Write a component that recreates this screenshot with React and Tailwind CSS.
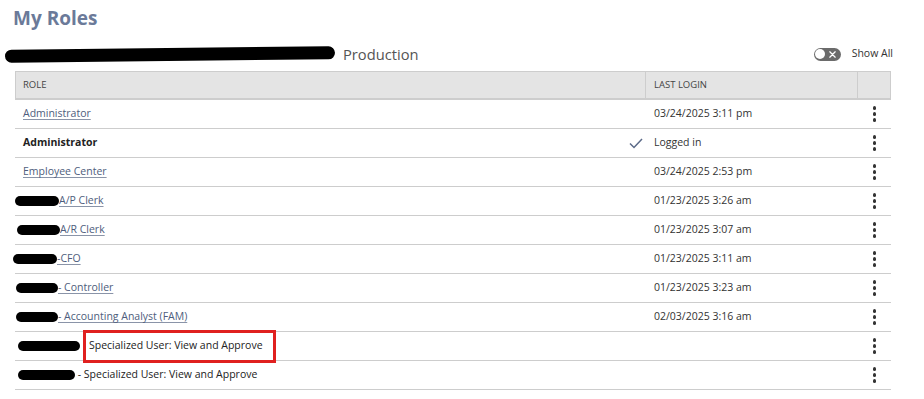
const rows = [
  { label: 'Administrator', link: true, last: '03/24/2025 3:11 pm' },
  { label: 'Administrator', bold: true, current: true, last: 'Logged in' },
  { label: 'Employee Center', link: true, last: '03/24/2025 2:53 pm' },
  { label: 'A/P Clerk', link: true, blob: 'w-[44px] -ml-[8px]', last: '01/23/2025 3:26 am' },
  { label: 'A/R Clerk', link: true, blob: 'w-[43px] -ml-[6px]', last: '01/23/2025 3:07 am' },
  { label: '-CFO', link: true, blob: 'w-[44px] -ml-[10px]', last: '01/23/2025 3:11 am' },
  { label: '- Controller', link: true, blob: 'w-[42px] -ml-[7px]', last: '01/23/2025 3:23 am' },
  { label: '- Accounting Analyst (FAM)', link: true, blob: 'w-[42px] -ml-[7px]', last: '02/03/2025 3:16 am' },
  { label: 'Specialized User: View and Approve', blob: 'w-[62px] -ml-[5px]', boxed: true, last: '' },
  { label: ' - Specialized User: View and Approve', blob: 'w-[57px] -ml-[5px]', last: '' },
]

function Kebab() {
  return (
    <div className="flex flex-col items-center gap-[2.5px]">
      <span className="w-[3.5px] h-[3.5px] rounded-full bg-[#333]" />
      <span className="w-[3.5px] h-[3.5px] rounded-full bg-[#333]" />
      <span className="w-[3.5px] h-[3.5px] rounded-full bg-[#333]" />
    </div>
  )
}

export default function App() {
  return (
    <div className="w-[924px] h-[399px] bg-white overflow-hidden text-[#333]" style={{ fontFamily: '"Open Sans", "Noto Sans", sans-serif' }}>
      <h1 className="pl-[13px] pt-[4px] text-[19px] font-bold text-[#6b7a99] leading-[28px]">My Roles</h1>

      <div className="flex items-center justify-between pl-[5px] pr-[31px] mt-[11px] h-[22px]">
        <div className="flex items-center">
          <span className="block w-[330px] h-[13px] bg-black rounded-full -rotate-[0.6deg]" />
          <span className="ml-[8px] text-[14.7px] text-[#555]">Production</span>
        </div>
        <div className="flex items-center gap-[10px]">
          <div className="w-[27px] h-[13px] rounded-full bg-[#6b6b6b] flex items-center justify-between px-[1.5px] mr-[1px]">
            <span className="w-[10px] h-[10px] rounded-full bg-white" />
            <svg width="9" height="9" viewBox="0 0 10 10" className="mr-[2px]">
              <path d="M2 2L8 8M8 2L2 8" stroke="white" strokeWidth="1.4" strokeLinecap="round" />
            </svg>
          </div>
          <span className="text-[10.5px] text-[#333]">Show All</span>
        </div>
      </div>

      <div className="ml-[15px] w-[876px] mt-[6px]">
        <div className="flex h-[29px] bg-[#e4e4e4] border border-[#cdcdcd] border-b-2 text-[9.5px] text-[#444] uppercase">
          <div className="w-[630px] px-[7px] flex items-center border-r border-[#cdcdcd]">Role</div>
          <div className="w-[212px] px-[8px] flex items-center border-r border-[#cdcdcd]">Last Login</div>
          <div className="flex-1" />
        </div>

        {rows.map((r, i) => (
          <div key={i} className="flex h-[29px] border-b border-[#cdcdcd] text-[10.5px]">
            <div className="w-[631px] pl-[8px] pr-[3px] flex items-center">
              {r.blob && <span className={`block h-[10px] bg-black rounded-full ${r.blob}`} />}
              {r.boxed ? (
                <span className="relative ml-[3px] border-[3px] border-[#e0201f] w-[193px] h-[33px] pl-[3px] flex items-center text-[#222]">
                  {r.label}
                </span>
              ) : r.link ? (
                <a className="text-[#4e5d7c] underline underline-offset-2 decoration-[#8a94a8]" href="#">
                  {r.label}
                </a>
              ) : (
                <span className={r.bold ? 'font-bold text-[#222]' : 'text-[#222] whitespace-pre'}>{r.label}</span>
              )}
              <div className="flex-1" />
              {r.current && (
                <svg width="14" height="11" viewBox="0 0 14 11">
                  <path d="M1 5.5L5 9.5L13 1" fill="none" stroke="#5b6a88" strokeWidth="1.5" />
                </svg>
              )}
            </div>
            <div className="w-[212px] px-[8px] flex items-center text-[#333]">{r.last}</div>
            <div className="flex-1 flex items-center justify-center">
              <Kebab />
            </div>
          </div>
        ))}
      </div>
    </div>
  )
}
